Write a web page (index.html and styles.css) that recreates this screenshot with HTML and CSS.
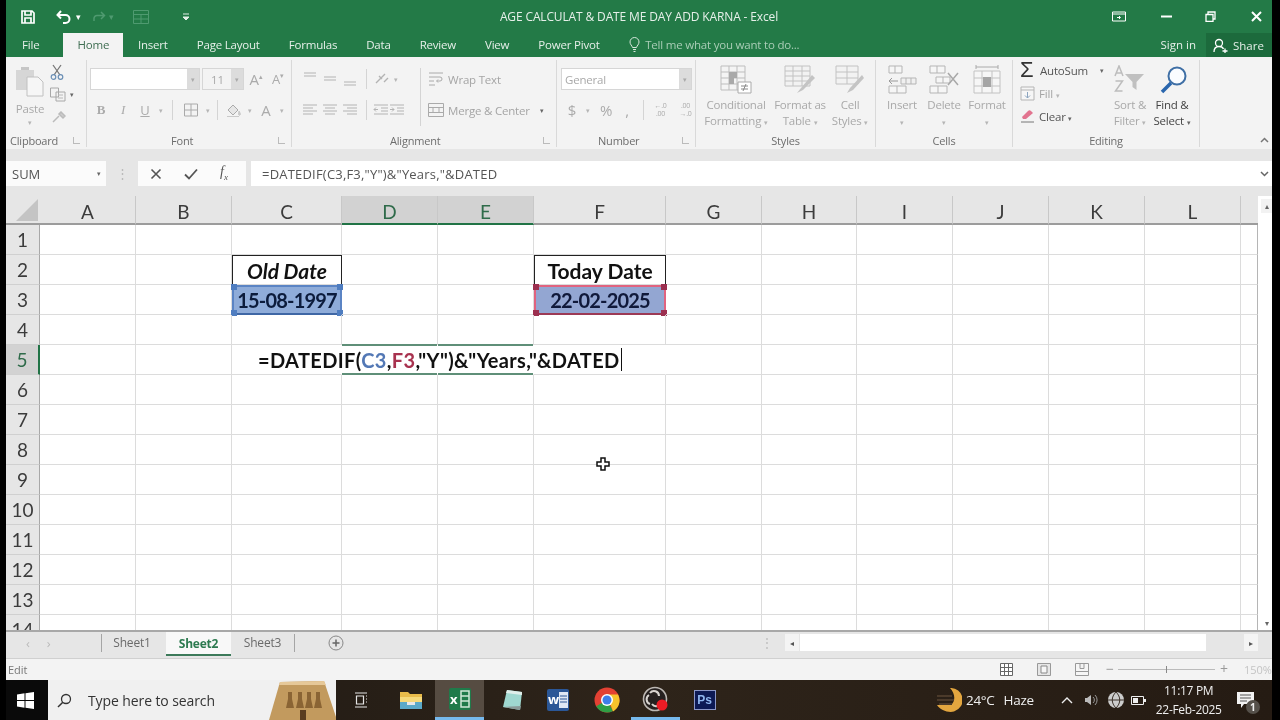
FILE: index.html
```html
<!DOCTYPE html>
<html lang="en">
<head>
    <meta charset="UTF-8">
    <title>AGE CALCULAT &amp; DATE ME DAY ADD KARNA - Excel</title>
    <link rel="stylesheet" href="styles.css">
</head>
<body>
<div class="screen">
    <div class="excel">
        <!-- title bar -->
        <div class="titlebar">
            <div class="qat">
                <svg class="qat-save" width="16" height="16" viewBox="0 0 16 16"><path d="M2 2h10l2 2v10H2z M5 2v4h6V2 M5 14V9h6v5" fill="none" stroke="#fff" stroke-width="1.7"/></svg>
                <svg class="qat-undo" width="17" height="14" viewBox="0 0 17 14"><path d="M5 1L1.500 5 5 8.500M2 5h7.500a3.500 3.500 0 0 1 0 8H7" fill="none" stroke="#fff" stroke-width="2"/></svg>
                <span class="qat-caret">▾</span>
                <svg class="qat-redo" width="14" height="12" viewBox="0 0 14 12"><path d="M9 1l3.500 3.500L9 8M12 4.500H5a3 3 0 0 0-3 3V10" fill="none" stroke="#4f9a70" stroke-width="1.500"/></svg>
                <span class="qat-caret dim">▾</span>
                <svg class="qat-form" width="16" height="14" viewBox="0 0 16 14"><path d="M.5.500h15v13H.5zM.5 4.500h15M.5 9h15M8 4.500V13.500" fill="none" stroke="#4f9a70"/></svg>
                <svg class="qat-more" width="8" height="8" viewBox="0 0 8 8"><path d="M1 1h6M1 4l3 3 3-3z" fill="#e4efe8" stroke="#e4efe8"/></svg>
            </div>
            <div class="doc-title">AGE CALCULAT &amp; DATE ME DAY ADD KARNA - Excel</div>
            <div class="winbtns">
                <svg width="14" height="11" viewBox="0 0 14 11"><path d="M.5 1h13v9H.5zM.5 3h13M5 6.500h3M7 5l1.500 1.500L7 8" fill="none" stroke="#fff"/></svg>
                <svg class="win-min" width="11" height="3" viewBox="0 0 11 3"><path d="M0 1.500h11" stroke="#fff" stroke-width="2"/></svg>
                <svg class="win-max" width="11" height="11" viewBox="0 0 11 11"><path d="M1 3.500h7v7H1zM3 3.500V1h7v7H8" fill="none" stroke="#fff" stroke-width="1.300"/></svg>
                <svg class="win-close" width="11" height="11" viewBox="0 0 11 11"><path d="M1 1l9 9M10 1l-9 9" stroke="#fff" stroke-width="2"/></svg>
            </div>
        </div>

        <!-- tabs -->
        <div class="tabs">
            <span class="tab tab-file">File</span>
            <span class="tab active">Home</span>
            <span class="tab">Insert</span>
            <span class="tab">Page Layout</span>
            <span class="tab">Formulas</span>
            <span class="tab">Data</span>
            <span class="tab">Review</span>
            <span class="tab">View</span>
            <span class="tab">Power Pivot</span>
            <span class="tell-me">
                <svg width="11" height="15" viewBox="0 0 11 15"><path d="M3.500 10.500C3 8.500 1 7.500 1 5a4.500 4.500 0 0 1 9 0c0 2.500-2 3.500-2.500 5.500zM4 12.500h3M4.500 14.500h2" fill="none" stroke="#d7e7dc"/></svg>
                Tell me what you want to do...
            </span>
            <span class="sign-in">Sign in</span>
            <span class="share">
                <svg width="15" height="15" viewBox="0 0 15 15"><path d="M1 14c0-4 2-5.500 5-5.500S10 9.500 10.500 11M6 8.500a3.500 3.500 0 1 0 0-7 3.500 3.500 0 0 0 0 7zM9.500 13h5M12 10.500v5" fill="none" stroke="#fff" stroke-width="1.300"/></svg>
                Share
            </span>
        </div>

        <!-- ribbon -->
        <div class="ribbon">
            <div class="group g-clipboard">
                <div class="group-body">
                    <div class="paste">
                        <svg width="30" height="32" viewBox="0 0 30 32"><path d="M1 5h18v20H1z" fill="#d6d6d6"/><path d="M6 5V2h8v3" fill="#c6c6c6"/><path d="M12 12h11l5 5v14H12z" fill="#f6f6f6" stroke="#c0c0c0"/></svg>
                        <span>Paste</span>
                        <i class="caret">▾</i>
                    </div>
                    <div class="clip-tools">
                        <svg class="cut" width="14" height="16" viewBox="0 0 14 16"><path d="M3 1l7 10M11 1L4 11" stroke="#777" stroke-width="1.300"/><circle cx="3.500" cy="13" r="2.300" fill="none" stroke="#6b8fb5" stroke-width="1.200"/><circle cx="10.500" cy="13" r="2.300" fill="none" stroke="#6b8fb5" stroke-width="1.200"/></svg>
                        <div class="copy-row">
                            <svg width="16" height="15" viewBox="0 0 16 15"><path d="M.5 1h8v9h-8zM6 5h9v9H6z" fill="#f3f3f3" stroke="#a8a8a8"/><path d="M8 8h5M8 11h5" stroke="#b8b8b8"/></svg>
                            <i class="caret dark">▾</i>
                        </div>
                        <svg class="painter" width="14" height="12" viewBox="0 0 14 12"><path d="M1 11l6-6M7 3l4 4M9 1l4 4-2 2-4-4z" stroke="#bbb" stroke-width="1.500" fill="#ccc"/></svg>
                    </div>
                </div>
                <div class="group-label"><span>Clipboard</span><i class="launcher"></i></div>
            </div>

            <div class="group g-font">
                <div class="group-body col">
                    <div class="tool-row">
                        <div class="combo w-110"><b class="drop">▾</b></div>
                        <div class="combo w-42 combo-size"><span>11</span><b class="drop">▾</b></div>
                        <span class="glyph w-24 big-a">A<sup>▴</sup></span>
                        <span class="glyph w-20 small-a">A<sup>▾</sup></span>
                    </div>
                    <div class="tool-row row-low">
                        <span class="glyph w-22 bold">B</span>
                        <span class="glyph w-22 ital">I</span>
                        <span class="glyph w-22 under">U</span>
                        <i class="caret w-10">▾</i>
                        <i class="sep"></i>
                        <svg class="w-24" width="24" height="14" viewBox="0 0 24 14"><path d="M5.500 1h13v12h-13zM5.500 7h13M12 1v12" fill="none" stroke="#aaa"/></svg>
                        <i class="caret w-10">▾</i>
                        <i class="sep sep-tight"></i>
                        <svg class="w-24" width="24" height="16" viewBox="0 0 24 16"><path d="M7 8l5-5 5 5-5 5z" fill="#e6e6e6" stroke="#aaa"/><path d="M18 9c1 2 2 3 1 4s-2 0-1-4zM6 14.500h12" stroke="#c9c9c9" fill="#c9c9c9"/></svg>
                        <i class="caret w-10">▾</i>
                        <span class="glyph w-22 color-a">A</span>
                        <i class="caret w-10">▾</i>
                    </div>
                </div>
                <div class="group-label"><span>Font</span><i class="launcher"></i></div>
            </div>

            <div class="group g-align">
                <div class="group-body">
                    <div class="col w-120">
                        <div class="tool-row">
                            <svg class="w-20" width="20" height="16" viewBox="0 0 20 16"><path d="M4 2h12M4 5h12" stroke="#b3b3b3"/></svg>
                            <svg class="w-20" width="20" height="16" viewBox="0 0 20 16"><path d="M4 6h12M4 9h12" stroke="#b3b3b3"/></svg>
                            <svg class="w-20" width="20" height="16" viewBox="0 0 20 16"><path d="M4 11h12M4 14h12" stroke="#b3b3b3"/></svg>
                            <i class="sep"></i>
                            <svg class="w-18" width="18" height="16" viewBox="0 0 18 16"><path d="M3 12L12 3M6 5l3 3M11 11l4-4" stroke="#b3b3b3" stroke-width="1.400"/></svg>
                            <i class="caret w-10">▾</i>
                        </div>
                        <div class="tool-row row-low">
                            <svg class="w-20" width="20" height="14" viewBox="0 0 20 14"><path d="M3 2h14M3 5h10M3 8h14M3 11h10" stroke="#b3b3b3"/></svg>
                            <svg class="w-20" width="20" height="14" viewBox="0 0 20 14"><path d="M3 2h14M5 5h10M3 8h14M5 11h10" stroke="#b3b3b3"/></svg>
                            <svg class="w-20" width="20" height="14" viewBox="0 0 20 14"><path d="M3 2h14M7 5h10M3 8h14M7 11h10" stroke="#b3b3b3"/></svg>
                            <i class="sep"></i>
                            <svg class="w-16" width="16" height="14" viewBox="0 0 16 14"><path d="M1 2h14M8 5h7M8 8h7M1 11h14M5 6.500H1M3 4.500l-2 2 2 2" fill="none" stroke="#b3b3b3"/></svg>
                            <svg class="w-16" width="16" height="14" viewBox="0 0 16 14"><path d="M1 2h14M8 5h7M8 8h7M1 11h14M1 6.500h4M3 4.500l2 2-2 2" fill="none" stroke="#b3b3b3"/></svg>
                        </div>
                    </div>
                    <i class="sep sep-tall"></i>
                    <div class="col wrap-col">
                        <div class="tool-row">
                            <svg width="16" height="14" viewBox="0 0 16 14"><path d="M1 1h14M1 5h11a2 2 0 0 1 0 4H9M1 9h5M1 13h6M10 7.500L8.500 9l1.500 1.500" fill="none" stroke="#aaa"/></svg>
                            <span class="dis-text">Wrap Text</span>
                        </div>
                        <div class="tool-row row-low">
                            <svg width="16" height="14" viewBox="0 0 16 14"><path d="M.5.500h15v13H.5zM.5 4.500h15M.5 9.500h15M5 4.500v5M11 4.500v5" fill="none" stroke="#aaa"/></svg>
                            <span class="dis-text">Merge &amp; Center</span>
                            <i class="caret dark merge-caret">▾</i>
                        </div>
                    </div>
                </div>
                <div class="group-label"><span>Alignment</span><i class="launcher"></i></div>
            </div>

            <div class="group g-number">
                <div class="group-body col">
                    <div class="tool-row">
                        <div class="combo w-131"><span class="combo-text">General</span><b class="drop">▾</b></div>
                    </div>
                    <div class="tool-row row-low">
                        <span class="glyph w-22 cur">$</span>
                        <i class="caret w-10">▾</i>
                        <span class="glyph w-26 cur">%</span>
                        <span class="glyph w-16 cur">,</span>
                        <i class="sep sep-num"></i>
                        <span class="dec w-25">←.0<br>.00</span>
                        <span class="dec w-25">.00<br>→.0</span>
                    </div>
                </div>
                <div class="group-label"><span>Number</span><i class="launcher"></i></div>
            </div>

            <div class="group g-styles">
                <div class="group-body">
                    <div class="big-btn w-70">
                        <svg width="32" height="30" viewBox="0 0 32 30"><path d="M1 1h24v24H1zM1 7h24M1 13h24M1 19h24M9 1v24M17 1v24" fill="#f4f4f4" stroke="#bdbdbd"/><path d="M9 7h8v6H9zM9 13h5v6H9z" fill="#a9a9a9"/><path d="M18 17h13v11H18z" fill="#fff" stroke="#aaa"/><path d="M21 21h7M21 24h7M26 19l-3 7" stroke="#888"/></svg>
                        <span>Conditional<br>Formatting <i class="caret">▾</i></span>
                    </div>
                    <div class="big-btn w-58">
                        <svg width="32" height="30" viewBox="0 0 32 30"><path d="M1 1h25v20H1zM1 6h25M1 11h25M1 16h25M9 1v20M18 1v20" fill="#f2f2f2" stroke="#c2c2c2"/><path d="M28 10L17 23l-4 5 6-3 12-12z" fill="#c4c4c4"/></svg>
                        <span>Format as<br>Table <i class="caret">▾</i></span>
                    </div>
                    <div class="big-btn w-42">
                        <svg width="30" height="30" viewBox="0 0 30 30"><path d="M1 1h22v18H1zM1 7h22M1 13h22M12 1v18" fill="#f2f2f2" stroke="#c2c2c2"/><path d="M27 10L15 23l-3 5 6-3 11-12z" fill="#c4c4c4"/></svg>
                        <span>Cell<br>Styles <i class="caret">▾</i></span>
                    </div>
                </div>
                <div class="group-label center"><span>Styles</span></div>
            </div>

            <div class="group g-cells">
                <div class="group-body">
                    <div class="big-btn w-52">
                        <svg width="30" height="30" viewBox="0 0 30 30"><path d="M2 1h13v7H2zM2 21h17v7H2zM10 21v7M8 1v7" fill="#f6f6f6" stroke="#b5b5b5"/><path d="M14 13h15v6H14zM19 13v6M24 13v6" fill="#f0f0f0" stroke="#b5b5b5"/><path d="M2 16h9M5 13l-3 3 3 3" fill="none" stroke="#999"/></svg>
                        <span>Insert<br><i class="caret">▾</i></span>
                    </div>
                    <div class="big-btn w-32">
                        <svg width="32" height="30" viewBox="0 0 32 30"><path d="M2 1h15v7H2zM2 21h17v7H2zM10 21v7M9 1v7M8 12h14v6H8zM15 12v6" fill="#f6f6f6" stroke="#b5b5b5"/><path d="M20 8l10 12M30 8L20 20" stroke="#a8a8a8" stroke-width="1.500"/></svg>
                        <span>Delete<br><i class="caret">▾</i></span>
                    </div>
                    <div class="big-btn w-54">
                        <svg width="30" height="30" viewBox="0 0 30 30"><path d="M2 6h26v22H2zM10 6v22M20 6v22M2 13h26M2 21h26" fill="#f6f6f6" stroke="#c2c2c2"/><path d="M11 12h8v10h-8z" fill="#a5a5a5"/><path d="M4 2h22M4 0v4M26 0v4" stroke="#aaa"/></svg>
                        <span>Format<br><i class="caret">▾</i></span>
                    </div>
                </div>
                <div class="group-label center"><span>Cells</span></div>
            </div>

            <div class="group g-editing">
                <div class="group-body">
                    <div class="col edit-col">
                        <div class="edit-row"><span class="sigma">Σ</span><span class="on-text">AutoSum</span><i class="caret dark autosum-caret">▾</i></div>
                        <div class="edit-row">
                            <svg width="15" height="15" viewBox="0 0 15 15"><path d="M1 1h13v13H1zM1 4h13" fill="#f6f6f6" stroke="#b5b5b5"/><path d="M7.500 6v6M5 9.500l2.500 2.500L10 9.500" fill="none" stroke="#8ba4bf"/></svg>
                            <span class="dis-plain">Fill <i class="caret">▾</i></span>
                        </div>
                        <div class="edit-row">
                            <svg width="15" height="14" viewBox="0 0 15 14"><path d="M2 8l6-6c1-1 2-1 3 0l2 2-7 6H3z" fill="#e2748f"/><path d="M1 13h13" stroke="#777"/></svg>
                            <span class="on-text">Clear <i class="caret dark">▾</i></span>
                        </div>
                    </div>
                    <div class="big-btn w-44 btn-sort">
                        <svg width="32" height="30" viewBox="0 0 32 30"><path d="M1 11L5 1l4 10M2.500 8h5M1.500 16h7L1.500 26h7" fill="none" stroke="#bdbdbd" stroke-width="1.500"/><path d="M11 9h19l-7.500 8v8l-4-3v-5z" fill="#c0c0c0"/></svg>
                        <span>Sort &amp;<br>Filter <i class="caret">▾</i></span>
                    </div>
                    <div class="big-btn w-40 btn-find">
                        <svg width="30" height="30" viewBox="0 0 30 30"><circle cx="18" cy="11" r="8.500" fill="#fafcff" stroke="#3f6fa5" stroke-width="2"/><path d="M12 18L3 27" stroke="#2a66ad" stroke-width="3.500"/></svg>
                        <span>Find &amp;<br>Select <i class="caret dark">▾</i></span>
                    </div>
                </div>
                <div class="group-label center"><span>Editing</span></div>
            </div>

            <div class="ribbon-end">
                <svg width="9" height="6" viewBox="0 0 9 6"><path d="M1 5l3.500-3.500L8 5" fill="none" stroke="#777" stroke-width="1.500"/></svg>
            </div>
        </div>

        <!-- formula bar -->
        <div class="formula-bar">
            <div class="name-box"><span>SUM</span><i class="caret dark">▾</i></div>
            <div class="fb-dots">⋮</div>
            <div class="fx-box">
                <svg width="12" height="12" viewBox="0 0 12 12"><path d="M1.500 1.500l9 9M10.500 1.500l-9 9" stroke="#555" stroke-width="1.600"/></svg>
                <svg width="14" height="12" viewBox="0 0 14 12"><path d="M1 6.500L5 10.500 13 1.500" fill="none" stroke="#555" stroke-width="1.800"/></svg>
                <span class="fx">f<sub>x</sub></span>
            </div>
            <div class="formula-input">
                <span>=DATEDIF(C3,F3,"Y")&amp;"Years,"&amp;DATED</span>
                <svg width="9" height="6" viewBox="0 0 9 6"><path d="M1 1l3.500 3.500L8 1" fill="none" stroke="#666" stroke-width="1.500"/></svg>
            </div>
        </div>

        <!-- sheet: cells come from script.js -->
        <div class="sheet-area">
            <div class="sheet" id="sheet"></div>
            <div class="vscroll">
                <span class="sb-btn">▴</span>
                <span class="sb-btn sb-down">▾</span>
            </div>
        </div>

        <!-- sheet tabs -->
        <div class="sheet-tabs">
            <span class="nav-arrows">‹&nbsp;&nbsp;&nbsp;&nbsp;&nbsp;›</span>
            <i class="tab-sep"></i>
            <span class="sheet-tab first">Sheet1</span>
            <span class="sheet-tab current">Sheet2</span>
            <span class="sheet-tab third">Sheet3</span>
            <i class="tab-sep"></i>
            <svg class="add-sheet" width="16" height="16" viewBox="0 0 16 16"><circle cx="8" cy="8" r="7" fill="none" stroke="#888"/><path d="M4.500 8h7M8 4.500v7" stroke="#666" stroke-width="1.500"/></svg>
            <span class="hs-dots">⋮</span>
            <div class="hscroll">
                <span class="hs-btn">◂</span>
                <span class="hs-track"></span>
                <span class="hs-rest"></span>
                <span class="hs-btn">▸</span>
            </div>
        </div>

        <!-- status bar -->
        <div class="statusbar">
            <span class="mode">Edit</span>
            <div class="views">
                <svg width="13" height="13" viewBox="0 0 13 13"><path d="M.5.500h12v12H.5zM.5 4.500h12M.5 8.500h12M4.500.500v12M8.500.500v12" fill="#fff" stroke="#666"/></svg>
                <svg width="14" height="13" viewBox="0 0 14 13"><path d="M.5.500h13v12H.5z" fill="#e6e6e6" stroke="#999"/><path d="M4 3h6v7H4z" fill="#f6f6f6" stroke="#888"/></svg>
                <svg width="14" height="13" viewBox="0 0 14 13"><path d="M.5.500h13v12H.5zM.5 8.500h13M5 .500v5h4v-5" fill="#f6f6f6" stroke="#999"/></svg>
            </div>
            <div class="zoom">
                <span class="zoom-sign">−</span>
                <span class="zoom-slider"><i></i></span>
                <span class="zoom-sign">+</span>
                <span class="zoom-val">150%</span>
            </div>
        </div>
    </div>

    <!-- windows taskbar -->
    <div class="taskbar">
        <div class="start">
            <svg width="17" height="17" viewBox="0 0 17 17"><path d="M0 2.500L7.500 1.300v6.700H0zM8.500 1.200L17 0v8H8.500zM0 9h7.500v6.700L0 14.500zM8.500 9H17v8L8.500 15.800z" fill="#fff"/></svg>
        </div>
        <div class="search">
            <svg width="15" height="15" viewBox="0 0 15 15"><circle cx="9" cy="6" r="4.500" fill="none" stroke="#333" stroke-width="1.300"/><path d="M5.800 9.200L1 14" stroke="#333" stroke-width="1.500"/></svg>
            <span>Type here to search</span>
            <svg class="temple" width="68" height="40" viewBox="0 0 68 40"><path d="M11 2l44-1 13 39H0z" fill="#c29a5e"/><path d="M11 2l44-1 2 4H10z" fill="#e6c898"/><g fill="#8a6434"><path d="M19 12h4v7l2 9h-8l2-9z"/><path d="M29 12h4v7l2 9h-8l2-9z"/><path d="M38 12h4v7l2 9h-8l2-9z"/><path d="M47 12h4v7l2 9h-8l2-9z"/></g><path d="M31 30h6v10h-6z" fill="#5a3d20"/></svg>
        </div>
        <div class="apps">
            <span class="app">
                <svg width="14" height="16" viewBox="0 0 14 16"><path d="M1 1h12M1 15h12M2.500 4h7v8h-7zM12 4h1M12 7h1M12 10h1" fill="none" stroke="#e6e6e6" stroke-width="1.200"/></svg>
            </span>
            <span class="app">
                <svg width="22" height="18" viewBox="0 0 22 18"><path d="M0 1h8l2 2h12v15H0z" fill="#e8bb4a"/><path d="M0 6h22v12H0z" fill="#f5d97a"/><path d="M0 11h22v7H0z" fill="#5aa9c9"/><path d="M7 11h8v3H7z" fill="#e8e8e8"/></svg>
            </span>
            <span class="app app-open">
                <svg width="24" height="22" viewBox="0 0 24 22"><rect x="1" y="0" width="22" height="22" rx="2" fill="#1f7a4a"/><path d="M13 3h8v16h-8z" fill="none" stroke="#cfe8d8" stroke-width="1.500"/><path d="M13 8h8M13 13h8" stroke="#cfe8d8" stroke-width="1.500"/></svg>
                <b class="xl-x">x</b>
            </span>
            <span class="app">
                <svg class="notepad" width="22" height="22" viewBox="0 0 22 22"><path d="M6 1l15 2-2 18-17-3z" fill="#9fd8d0"/><path d="M6 1l15 2v3L5 4z" fill="#dfeeea"/><path d="M2 18l17 3 1-4z" fill="#8a9a98"/></svg>
            </span>
            <span class="app">
                <svg width="24" height="22" viewBox="0 0 24 22"><rect x="1" width="22" height="22" rx="2" fill="#2b5797"/><path d="M13 3h9v16h-9z" fill="#dfe8f5"/><path d="M14 7h7M14 10h7M14 13h7" stroke="#2b5797"/></svg>
                <b class="wd-w">w</b>
            </span>
            <span class="app">
                <svg width="26" height="26" viewBox="0 0 26 26"><circle cx="13" cy="13" r="12.500" fill="#e34133"/><path d="M13 13L2.200 19.300A12.500 12.500 0 0 0 19 24z" fill="#2f9e44"/><path d="M13 7.500h11a12.500 12.500 0 0 1-5 17z" fill="#f6c32c"/><circle cx="13" cy="13" r="6" fill="#fff"/><circle cx="13" cy="13" r="4.500" fill="#3f7ee8"/></svg>
            </span>
            <span class="app app-running">
                <svg width="28" height="26" viewBox="0 0 28 26"><circle cx="13" cy="13" r="11.500" fill="#262120" stroke="#bdb8b4" stroke-width="1.600"/><path d="M8 7a5 5 0 0 1 9 3M19 16a5 5 0 0 1-9 2M8 18a5 5 0 0 1-1-9" fill="none" stroke="#d8d4d0" stroke-width="2"/><circle cx="20" cy="19" r="5.500" fill="#ee1c25"/></svg>
            </span>
            <span class="app">
                <span class="ps">Ps</span>
            </span>
        </div>
        <div class="tray">
            <svg class="weather" width="26" height="24" viewBox="0 0 26 24"><path d="M14 0a12 12 0 0 1 4 23.500C12 25 4 22 1 17h14c5-4 4-12-1-17z" fill="#e3a63f"/><path d="M1 8h15M1 12h17M3 16h13" stroke="#4b3a2a" stroke-width="2"/></svg>
            <span class="temp">24°C</span>
            <span class="haze">Haze</span>
            <svg class="tray-up" width="12" height="8" viewBox="0 0 12 8"><path d="M1 7l5-5 5 5" fill="none" stroke="#eee" stroke-width="1.400"/></svg>
            <svg class="tray-vol" width="15" height="14" viewBox="0 0 15 14"><path d="M1 5h2l4-3v10l-4-3H1z" fill="#bbb"/><path d="M9 4a4 4 0 0 1 0 6M11 2a7 7 0 0 1 0 10" fill="none" stroke="#999"/></svg>
            <svg class="tray-net" width="18" height="18" viewBox="0 0 18 18"><circle cx="9" cy="9" r="8" fill="#ccc"/><path d="M1 9h16M9 1c-5 5-5 11 0 16M9 1c5 5 5 11 0 16" fill="none" stroke="#3a3028"/></svg>
            <svg class="tray-bat" width="15" height="9" viewBox="0 0 15 9"><path d="M.5.500h12v8H.5z" fill="none" stroke="#eee"/><path d="M2 2h5v5H2z" fill="#eee"/><path d="M13 3h2v3h-2z" fill="#eee"/></svg>
            <div class="clock"><span>11:17 PM</span><span>22-Feb-2025</span></div>
            <span class="notify">
                <svg width="17" height="16" viewBox="0 0 17 16"><path d="M0 0h17v12H7l-3 4v-4H0z" fill="#f2f2f2"/><path d="M3 3h11M3 6h11M3 9h7" stroke="#555"/></svg>
                <b>1</b>
            </span>
        </div>
    </div>
</div>
<script src="script.js"></script>
</body>
</html>
```

FILE: styles.css
```css
* {
    box-sizing: border-box;
}

html,
body {
    margin: 0;
    height: 100%;
    background-color: #000;
    overflow: hidden;
}

.screen {
    width: 1280px;
    height: 720px;
    display: flex;
    flex-direction: column;
    font-family: "Open Sans", sans-serif;
    filter: blur(0.45px);
}

.excel {
    width: 1266px;
    height: 680px;
    margin-left: 6px;
    display: flex;
    flex-direction: column;
    background-color: #f3f3f3;
}

i {
    font-style: normal;
}

/* title bar */
.titlebar {
    height: 33px;
    flex: none;
    display: grid;
    grid-template-columns: 1fr auto 1fr;
    align-items: center;
    background-color: #237a47;
    color: #e6efe9;
}

.qat {
    display: flex;
    align-items: center;
    padding-left: 14px;
}

.qat-undo {
    margin-left: 20px;
}

.qat-caret {
    font-size: 9px;
    margin-left: 3px;
    color: #fff;
}

.qat-caret.dim {
    color: #4f9a70;
}

.qat-redo {
    margin-left: 11px;
}

.qat-form {
    margin-left: 19px;
}

.qat-more {
    margin-left: 33px;
}

.doc-title {
    font-size: 12px;
    letter-spacing: -0.14px;
}

.winbtns {
    display: flex;
    align-items: center;
    justify-content: flex-end;
    padding-right: 10px;
}

.win-min {
    margin-left: 35px;
}

.win-max {
    margin-left: 33px;
}

.win-close {
    margin-left: 35px;
}

/* tabs */
.tabs {
    height: 24px;
    flex: none;
    display: flex;
    align-items: center;
    background-color: #237a47;
    color: #e6efe9;
    font-size: 11.5px;
    white-space: nowrap;
}

.tab {
    height: 100%;
    display: flex;
    align-items: center;
    padding: 0 14.5px 2px;
    letter-spacing: -0.2px;
}

.tab-file {
    padding: 0 24px 2px 16px;
}

.tab.active {
    background-color: #f3f3f3;
    color: #3f6e52;
    width: 60px;
    justify-content: center;
    padding: 0 0 2px;
}

.tell-me {
    display: flex;
    align-items: center;
    gap: 5px;
    margin-left: 15px;
    padding-bottom: 2px;
    color: #a9cdb6;
    letter-spacing: -0.2px;
}

.sign-in {
    margin-left: auto;
    padding: 0 10px 2px 0;
}

.share {
    width: 66px;
    height: 100%;
    display: flex;
    align-items: center;
    gap: 5px;
    padding-left: 7px;
    background-color: #1c6a3c;
}

/* ribbon */
.ribbon {
    height: 92px;
    flex: none;
    display: flex;
    padding-top: 3px;
    background-color: #f3f3f3;
    color: #a9a9a9;
    font-size: 11.5px;
    letter-spacing: -0.2px;
    white-space: nowrap;
}

.group {
    display: flex;
    flex-direction: column;
    height: 87px;
    border-right: 1px solid #d9d9d9;
}

.g-clipboard { width: 81px; }
.g-font { width: 205px; }
.g-align { width: 265px; }
.g-number { width: 139px; }
.g-styles { width: 180px; }
.g-cells { width: 137px; }
.g-editing { width: 187px; }

.group-body {
    height: 73px;
    display: flex;
}

.col {
    display: flex;
    flex-direction: column;
}

.group-label {
    display: flex;
    justify-content: space-between;
    align-items: center;
    height: 14px;
    padding: 0 6px 0 4px;
    color: #6d6d6d;
    font-size: 11px;
}

.group-label.center {
    justify-content: center;
    padding: 0;
}

.g-font .group-label span {
    margin-left: 80px;
}

.g-align .group-label span {
    margin-left: 94px;
}

.g-number .group-label span {
    margin-left: 37px;
}

.launcher {
    width: 7px;
    height: 7px;
    border-left: 1px solid #bbb;
    border-bottom: 1px solid #bbb;
}

.caret {
    display: inline-block;
    font-size: 7px;
    color: #b5b5b5;
    text-align: center;
}

.caret.dark {
    color: #666;
}

.tool-row {
    height: 22px;
    margin-top: 8px;
    display: flex;
    align-items: center;
}

.row-low {
    margin-top: 9px;
}

.w-10 { width: 10px; flex: none; }
.w-16 { width: 16px; flex: none; }
.w-18 { width: 18px; flex: none; }
.w-20 { width: 20px; flex: none; }
.w-22 { width: 22px; flex: none; }
.w-24 { width: 24px; flex: none; }
.w-25 { width: 25px; flex: none; }
.w-26 { width: 26px; flex: none; }
.w-32 { width: 32px; flex: none; }
.w-40 { width: 40px; flex: none; }
.w-42 { width: 42px; flex: none; }
.w-44 { width: 44px; flex: none; }
.w-52 { width: 52px; flex: none; }
.w-54 { width: 54px; flex: none; }
.w-58 { width: 58px; flex: none; }
.w-70 { width: 70px; flex: none; }
.w-110 { width: 110px; flex: none; }
.w-120 { width: 120px; flex: none; }
.w-131 { width: 131px; flex: none; }

.sep {
    width: 1px;
    height: 20px;
    margin: 0 6px;
    flex: none;
    background-color: #d4d4d4;
}

.sep-tight {
    margin: 0 3px 0 4px;
}

.sep-tall {
    height: 58px;
    margin: 8px 7px 0 0;
}

.sep-num {
    margin: 0 4px 0 8px;
}

/* clipboard */
.paste {
    width: 40px;
    margin-left: 4px;
    padding-top: 5px;
    display: flex;
    flex-direction: column;
    align-items: center;
    line-height: 14px;
}

.paste svg {
    margin-bottom: 5px;
}

.clip-tools {
    display: flex;
    flex-direction: column;
    padding-top: 4px;
    gap: 7px;
}

.copy-row {
    display: flex;
    align-items: center;
    gap: 4px;
}

.painter {
    margin-left: 2px;
    margin-top: 2px;
}

/* font */
.g-font .group-body {
    padding-left: 3px;
}

.combo {
    height: 22px;
    display: flex;
    align-items: center;
    justify-content: space-between;
    background-color: #fff;
    border: 1px solid #d6d6d6;
}

.combo-size {
    margin-left: 2px;
    background-color: #f3f3f3;
    padding-left: 8px;
}

.combo-text {
    padding-left: 3px;
}

.drop {
    width: 12px;
    height: 100%;
    margin-left: auto;
    display: flex;
    align-items: center;
    justify-content: center;
    font-size: 7px;
    font-weight: normal;
    background-color: #dcdcdc;
    color: #aaa;
}

.glyph {
    text-align: center;
    color: #ababab;
    font-size: 13px;
}

.big-a {
    font-size: 15px;
}

.small-a {
    font-size: 13px;
}

.glyph sup {
    font-size: 7px;
    vertical-align: 6px;
    line-height: 0;
}

.bold {
    font-weight: 700;
    font-family: "Liberation Serif", serif;
}

.ital {
    font-style: italic;
    font-family: "Liberation Serif", serif;
}

.under {
    text-decoration: underline;
}

.color-a {
    font-size: 15px;
}

/* alignment */
.g-align .group-body {
    padding-left: 8px;
}

.wrap-col svg {
    flex: none;
}

.dis-text {
    margin-left: 4px;
    color: #a5a5a5;
}

.dis-plain {
    color: #a5a5a5;
}

.merge-caret {
    margin-left: 10px;
}

/* number */
.g-number .group-body {
    padding-left: 4px;
}

.cur {
    font-size: 15px;
}

.dec {
    font-size: 7px;
    line-height: 8px;
    text-align: center;
    color: #aaa;
}

/* big ribbon buttons */
.big-btn {
    display: flex;
    flex-direction: column;
    align-items: center;
    text-align: center;
    line-height: 16px;
    padding-top: 5px;
}

.big-btn svg {
    height: 30px;
    flex: none;
}

.big-btn span {
    margin-top: 2px;
}

.g-styles .group-body {
    padding-left: 5px;
}

.edit-col {
    width: 95px;
    padding-left: 7px;
    margin-top: -1px;
    gap: 1px;
}

.edit-row {
    height: 22px;
    display: flex;
    align-items: center;
    gap: 4px;
}

.sigma {
    width: 16px;
    font-size: 22px;
    line-height: 22px;
    color: #333;
    font-family: "Liberation Sans", sans-serif;
}

.on-text {
    color: #555;
}

.autosum-caret {
    margin-left: 8px;
}

.btn-find span {
    color: #444;
}

.btn-find svg {
    margin-left: 3px;
}

.ribbon-end {
    flex: 1;
    display: flex;
    align-items: flex-end;
    justify-content: flex-end;
    padding: 0 3px 6px 0;
}

/* formula bar */
.formula-bar {
    height: 47px;
    flex: none;
    display: flex;
    padding: 12px 0 10px;
    background-color: #e6e6e6;
    font-size: 13px;
    color: #555;
    white-space: nowrap;
}

.name-box {
    width: 100px;
    display: flex;
    align-items: center;
    justify-content: space-between;
    padding: 0 5px 0 6px;
    background-color: #fbfbfb;
}

.fb-dots {
    width: 32px;
    text-align: center;
    line-height: 25px;
    color: #bbb;
}

.fx-box {
    width: 108px;
    display: flex;
    align-items: center;
    gap: 22px;
    padding-left: 12px;
    background-color: #fbfbfb;
}

.fx {
    font-family: "Liberation Serif", serif;
    font-style: italic;
    font-size: 14px;
    line-height: 1;
}

.fx sub {
    font-size: 9px;
}

.formula-input {
    flex: 1;
    margin-left: 5px;
    display: flex;
    align-items: center;
    justify-content: space-between;
    padding: 0 3px 0 11px;
    background-color: #fff;
    letter-spacing: 0.2px;
}

/* sheet */
.sheet-area {
    height: 434px;
    flex: none;
    display: flex;
    background-color: #fff;
}

.sheet {
    position: relative;
    width: 1252px;
    height: 100%;
    overflow: hidden;
    display: grid;
    grid-template-columns: 34px 96px 96px 110px 96px 96px 132px 96px 95px 96px 96px 96px 96px 17px;
    grid-auto-rows: 30px;
    grid-template-rows: 29px;
    font-family: Lato, sans-serif;
    color: #111;
}

.corner,
.col-head {
    background-color: #e6e6e6;
    border-bottom: 2px solid #9c9c9c;
    position: relative;
}

.corner::after {
    content: "";
    position: absolute;
    right: 2px;
    bottom: 2px;
    border-style: solid;
    border-width: 0 0 22px 22px;
    border-color: transparent transparent #c4c4c4 transparent;
}

.col-head {
    display: flex;
    align-items: center;
    justify-content: center;
    padding-top: 3px;
    font-size: 19px;
    color: #3c3c3c;
    border-right: 1px solid #c8c8c8;
}

.col-head.sel {
    background-color: #d2d2d2;
    color: #2f6b4a;
    border-bottom-color: #217346;
}

.col-blank {
    background-color: #e6e6e6;
    border-bottom: 2px solid #9c9c9c;
}

.row-head {
    display: flex;
    align-items: center;
    justify-content: center;
    font-size: 19px;
    color: #3c3c3c;
    background-color: #e6e6e6;
    border-right: 1px solid #a8a8a8;
    border-bottom: 1px solid #d0d0d0;
}

.row-head.sel {
    background-color: #d2d2d2;
    color: #2f6b4a;
    border-right: 2px solid #217346;
}

.cell {
    position: relative;
    display: flex;
    align-items: center;
    justify-content: center;
    font-size: 21px;
    font-weight: 700;
    border-right: 1px solid #dcdcdc;
    border-bottom: 1px solid #dcdcdc;
    white-space: nowrap;
}

.cell.last {
    border-bottom: 1px solid #dcdcdc;
    border-right: 1px solid #b5b5b5;
}

.cell.boxed {
    border-top: 1px solid #222;
    border-left: 1px solid #222;
    border-right: 1px solid #222;
}

.cell.italic {
    font-style: italic;
}

.cell.ref-c {
    background-color: #8facd9;
    color: #0c1c3c;
    border: 2px solid #5b84c4;
    border-bottom-color: #3f67a5;
    font-size: 20px;
    letter-spacing: -0.8px;
}

.cell.ref-f {
    background-color: #93a6d2;
    color: #10193a;
    border: 2px solid #e0637f;
    border-bottom-color: #9c3a55;
    font-size: 20px;
    letter-spacing: -0.8px;
}

.cell.editing {
    justify-content: flex-start;
    padding-left: 26px;
    overflow: visible;
    z-index: 2;
    border-right-color: transparent;
    font-size: 20px;
}

.formula-text {
    letter-spacing: 0.36px;
}

.cell.marching::before,
.cell.marching::after {
    content: "";
    position: absolute;
    left: 0;
    right: 0;
    height: 2px;
    background-color: #5f8f78;
}

.cell.marching::before {
    top: -1px;
}

.cell.marching::after {
    bottom: -1px;
}

.cell.hide-right {
    border-right-color: transparent;
}

.ref-blue {
    color: #5378b5;
}

.ref-red {
    color: #a8324f;
}

.caret-line {
    flex: none;
    width: 1px;
    height: 23px;
    margin-left: 1px;
    background-color: #111;
}

.handle {
    position: absolute;
    width: 6px;
    height: 6px;
    background-color: #4f7dc0;
}

.ref-f .handle {
    background-color: #9c3050;
}

.h-tl { left: -3px; top: -3px; }
.h-tr { right: -3px; top: -3px; }
.h-bl { left: -3px; bottom: -3px; }
.h-br { right: -3px; bottom: -3px; }

.pointer {
    position: absolute;
    left: 590px;
    top: 259px;
    z-index: 3;
}

.vscroll {
    flex: 1;
    padding-top: 3px;
    display: flex;
    flex-direction: column;
    justify-content: space-between;
    align-items: flex-end;
    background-color: #fff;
}

.sb-btn {
    width: 11px;
    height: 14px;
    font-size: 8px;
    line-height: 14px;
    text-align: center;
    color: #666;
    background-color: #f2f2f2;
}

.sb-down {
    background-color: #fff;
}

/* sheet tabs */
.sheet-tabs {
    height: 28px;
    flex: none;
    display: flex;
    align-items: center;
    padding-bottom: 5px;
    background-color: #e6e6e6;
    border-top: 2px solid #a8a8a8;
    font-size: 12px;
    color: #6a6a6a;
}

.nav-arrows {
    width: 95px;
    padding-left: 20px;
    color: #bbb;
    font-size: 13px;
}

.tab-sep {
    width: 1px;
    height: 18px;
    background-color: #a5a5a5;
    flex: none;
}

.sheet-tab {
    height: 100%;
    display: flex;
    align-items: center;
    justify-content: center;
    letter-spacing: -0.2px;
}

.sheet-tab.first {
    width: 64px;
    padding-right: 4px;
}

.sheet-tab.third {
    width: 63px;
}

.sheet-tab.current {
    width: 65px;
    height: 24px;
    align-self: flex-start;
    color: #2c7a4f;
    font-weight: 700;
    background-color: #f8f8f8;
    border-bottom: 2px solid #3c7a5a;
}

.add-sheet {
    margin-left: 33px;
}

.hs-dots {
    margin-left: 417px;
    color: #bbb;
}

.hscroll {
    margin-left: 12px;
    height: 17px;
    flex: 1;
    display: flex;
    padding-right: 14px;
}

.hs-btn {
    width: 14px;
    font-size: 8px;
    line-height: 17px;
    text-align: center;
    background-color: #f4f4f4;
    color: #555;
}

.hs-track {
    width: 406px;
    margin-left: 1px;
    background-color: #fff;
    flex: none;
}

.hs-rest {
    flex: 1;
}

/* status bar */
.statusbar {
    height: 22px;
    flex: none;
    display: flex;
    align-items: center;
    padding-bottom: 1px;
    background-color: #f3f3f3;
    border-top: 1px solid #d0d0d0;
    font-size: 11px;
    color: #777;
}

.mode {
    padding-left: 2px;
}

.views {
    margin-left: auto;
    display: flex;
    align-items: center;
    gap: 24px;
}

.zoom {
    width: 166px;
    margin-left: 17px;
    display: flex;
    align-items: center;
}

.zoom-sign {
    width: 8px;
    text-align: center;
    color: #999;
    font-size: 14px;
    line-height: 1;
}

.zoom-slider {
    flex: none;
    width: 97px;
    height: 1px;
    margin: 0 5px 0 4px;
    background-color: #bbb;
    position: relative;
}

.zoom-slider i {
    position: absolute;
    left: 48px;
    top: -3px;
    width: 1px;
    height: 7px;
    background-color: #888;
}

.zoom-val {
    margin-left: 16px;
    color: #c4c4c4;
    font-size: 11px;
}

/* taskbar */
.taskbar {
    width: 1266px;
    height: 40px;
    margin-left: 6px;
    flex: none;
    display: flex;
    background: linear-gradient(90deg, #1d1712 0%, #2e241a 50%, #251b13 100%);
    color: #eee;
}

.start {
    width: 42px;
    display: flex;
    align-items: center;
    justify-content: center;
    padding-right: 4px;
    background-color: #0a0a0a;
}

.search {
    width: 288px;
    display: flex;
    align-items: center;
    padding-left: 9px;
    background-color: #f0f0f0;
    color: #333;
    font-size: 14px;
    letter-spacing: -0.1px;
    overflow: hidden;
}

.search span {
    margin-left: 16px;
}

.temple {
    margin-left: auto;
    margin-right: -1px;
}

.apps {
    display: flex;
    align-items: stretch;
}

.app {
    width: 49px;
    position: relative;
    display: flex;
    align-items: center;
    justify-content: center;
}

.app:first-child {
    width: 50px;
}

.app-open {
    background-color: #564c42;
    border-bottom: 3px solid #76b9ed;
}

.app-running {
    border-bottom: 3px solid #76b9ed;
}

.notepad {
    margin-left: 6px;
}

.xl-x,
.wd-w {
    position: absolute;
    left: 15px;
    top: 10px;
    color: #fff;
    font-size: 13px;
    font-weight: 700;
}

.ps {
    width: 22px;
    height: 20px;
    display: flex;
    align-items: center;
    justify-content: center;
    background-color: #0d1a55;
    border: 1px solid #8c98c9;
    color: #8fb6ef;
    font-size: 12px;
    font-weight: 700;
    font-family: "Liberation Sans", sans-serif;
}

.tray {
    flex: 1;
    display: flex;
    align-items: center;
    font-size: 13.5px;
    letter-spacing: -0.3px;
}

.weather {
    margin-left: 207px;
}

.temp {
    margin-left: 4px;
}

.haze {
    margin-left: 9px;
}

.tray-up {
    margin-left: 27px;
}

.tray-vol {
    margin-left: 11px;
}

.tray-net {
    margin-left: 8px;
}

.tray-bat {
    margin-left: 6px;
}

.clock {
    width: 76px;
    margin-left: 5px;
    display: flex;
    flex-direction: column;
    align-items: center;
    gap: 2px;
    font-size: 12px;
    line-height: 17px;
}

.notify {
    margin-left: 10px;
    position: relative;
    display: flex;
}

.notify b {
    position: absolute;
    right: -6px;
    bottom: -6px;
    width: 14px;
    height: 14px;
    border-radius: 50%;
    background-color: #55504a;
    font-size: 10px;
    line-height: 14px;
    text-align: center;
}
```

FILE: script.js
```js
// Build the worksheet cells
const sheet = document.getElementById('sheet');
const letters = ['A', 'B', 'C', 'D', 'E', 'F', 'G', 'H', 'I', 'J', 'K', 'L'];
const handles = '<i class="handle h-tl"></i><i class="handle h-tr"></i><i class="handle h-bl"></i><i class="handle h-br"></i>';
const formula = '<span class="formula-text">=DATEDIF(<span class="ref-blue">C3</span>,<span class="ref-red">F3</span>,"Y")&amp;"Years,"&amp;DATED</span><i class="caret-line"></i>';

const cells = {
    C2: { text: 'Old Date', cls: 'boxed italic' },
    F2: { text: 'Today Date', cls: 'boxed' },
    C3: { text: '15-08-1997' + handles, cls: 'ref-c' },
    F3: { text: '22-02-2025' + handles, cls: 'ref-f' },
    C5: { text: formula, cls: 'editing' },
    D5: { text: '', cls: 'marching hide-right' },
    E5: { text: '', cls: 'marching hide-right' },
    F5: { text: '', cls: 'hide-right' }
};

function addCell(cls, html) {
    const div = document.createElement('div');
    div.className = cls;
    div.innerHTML = html || '';
    sheet.appendChild(div);
}

addCell('corner');
letters.forEach(letter => {
    addCell(letter === 'D' || letter === 'E' ? 'col-head sel' : 'col-head', letter);
});
addCell('col-blank');

for (let row = 1; row <= 14; row++) {
    addCell(row === 5 ? 'row-head sel' : 'row-head', row);
    letters.forEach(letter => {
        const cell = cells[letter + row] || {};
        addCell('cell ' + (cell.cls || ''), cell.text);
    });
    addCell('cell last');
}

// Excel's fat white cross pointer
const pointer = document.createElement('div');
pointer.className = 'pointer';
pointer.innerHTML = '<svg width="14" height="14" viewBox="0 0 14 14"><path d="M5 1h4v4h4v4H9v4H5V9H1V5h4z" fill="#fff" stroke="#111" stroke-width="1.500"/></svg>';
sheet.appendChild(pointer);
```
